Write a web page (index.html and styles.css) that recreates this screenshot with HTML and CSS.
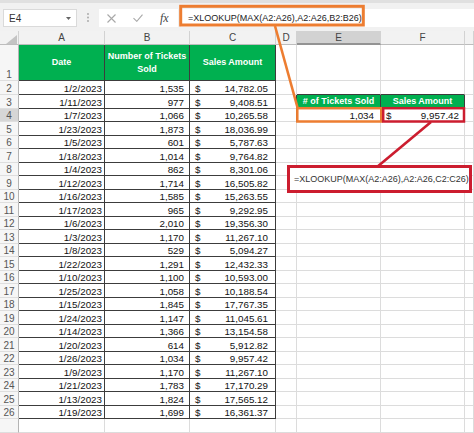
FILE: index.html
```html
<!DOCTYPE html>
<html lang="en">
<head>
    <meta charset="UTF-8">
    <meta name="viewport" content="width=device-width, initial-scale=1.0">
    <title>XLOOKUP with MAX</title>
    <link rel="stylesheet" href="styles.css">
</head>
<body>
    <div class="formula-bar">
        <div class="name-box">
            <span>E4</span>
            <svg class="caret" width="5" height="3" viewBox="0 0 5 3"><path d="M0 0h5L2.5 3z" fill="#666"/></svg>
        </div>
        <svg class="grip" width="8" height="18" viewBox="0 0 8 18">
            <circle cx="4" cy="5" r="0.9" fill="#a5a5a5"/>
            <circle cx="4" cy="8.5" r="0.9" fill="#a5a5a5"/>
            <circle cx="4" cy="12" r="0.9" fill="#a5a5a5"/>
        </svg>
        <div class="fx-buttons">
            <svg width="9" height="9" viewBox="0 0 9 9"><path d="M0.5 0.5L8.5 8.5M8.5 0.5L0.5 8.5" stroke="#a8a8a8" stroke-width="1.1" fill="none"/></svg>
            <svg width="10" height="8" viewBox="0 0 10 8"><path d="M0.5 4.2L3.8 7.3L9.5 0.6" stroke="#a8a8a8" stroke-width="1.1" fill="none"/></svg>
            <span class="fx">fx</span>
        </div>
        <div class="formula-input">=XLOOKUP(MAX(A2:A26),A2:A26,B2:B26)</div>
    </div>

    <table class="sheet">
        <colgroup>
            <col class="c-rn"><col class="c-a"><col class="c-b"><col class="c-c">
            <col class="c-d"><col class="c-e"><col class="c-f"><col class="c-g">
        </colgroup>
        <tr class="row-head">
            <th class="corner"><svg width="11" height="9" viewBox="0 0 11 9"><path d="M11 0V9H0z" fill="#c4c4c4"/></svg></th>
            <th>A</th><th>B</th><th>C</th><th>D</th><th class="sel">E</th><th>F</th><th></th>
        </tr>
        <tr class="row-title">
            <th class="rn">1</th>
            <td class="t hd">Date</td>
            <td class="t hd">Number of Tickets<br>Sold</td>
            <td class="t hd">Sales Amount</td>
            <td></td><td></td><td></td><td></td>
        </tr>
        <tr><th class="rn">2</th><td class="t a">1/2/2023</td><td class="t n">1,535</td><td class="t m"><span class="cur">$</span>14,782.05</td><td></td><td class="kb"></td><td class="kb"></td><td></td></tr>
        <tr><th class="rn">3</th><td class="t a">1/11/2023</td><td class="t n">977</td><td class="t m"><span class="cur">$</span>9,408.51</td><td class="kr"></td><td class="t hd">#&nbsp;of Tickets Sold</td><td class="t hd">Sales Amount</td><td></td></tr>
        <tr><th class="rn sel">4</th><td class="t a">1/7/2023</td><td class="t n">1,066</td><td class="t m"><span class="cur">$</span>10,265.58</td><td class="kr"></td><td class="t n result">1,034</td><td class="t m result"><span class="cur">$</span>9,957.42</td><td></td></tr>
        <tr><th class="rn">5</th><td class="t a">1/23/2023</td><td class="t n">1,873</td><td class="t m"><span class="cur">$</span>18,036.99</td><td></td><td></td><td></td><td></td></tr>
        <tr><th class="rn">6</th><td class="t a">1/5/2023</td><td class="t n">601</td><td class="t m"><span class="cur">$</span>5,787.63</td><td></td><td></td><td></td><td></td></tr>
        <tr><th class="rn">7</th><td class="t a">1/18/2023</td><td class="t n">1,014</td><td class="t m"><span class="cur">$</span>9,764.82</td><td></td><td></td><td></td><td></td></tr>
        <tr><th class="rn">8</th><td class="t a">1/4/2023</td><td class="t n">862</td><td class="t m"><span class="cur">$</span>8,301.06</td><td></td><td></td><td></td><td></td></tr>
        <tr><th class="rn">9</th><td class="t a">1/12/2023</td><td class="t n">1,714</td><td class="t m"><span class="cur">$</span>16,505.82</td><td></td><td></td><td></td><td></td></tr>
        <tr><th class="rn">10</th><td class="t a">1/16/2023</td><td class="t n">1,585</td><td class="t m"><span class="cur">$</span>15,263.55</td><td></td><td></td><td></td><td></td></tr>
        <tr><th class="rn">11</th><td class="t a">1/17/2023</td><td class="t n">965</td><td class="t m"><span class="cur">$</span>9,292.95</td><td></td><td></td><td></td><td></td></tr>
        <tr><th class="rn">12</th><td class="t a">1/6/2023</td><td class="t n">2,010</td><td class="t m"><span class="cur">$</span>19,356.30</td><td></td><td></td><td></td><td></td></tr>
        <tr><th class="rn">13</th><td class="t a">1/3/2023</td><td class="t n">1,170</td><td class="t m"><span class="cur">$</span>11,267.10</td><td></td><td></td><td></td><td></td></tr>
        <tr><th class="rn">14</th><td class="t a">1/8/2023</td><td class="t n">529</td><td class="t m"><span class="cur">$</span>5,094.27</td><td></td><td></td><td></td><td></td></tr>
        <tr><th class="rn">15</th><td class="t a">1/22/2023</td><td class="t n">1,291</td><td class="t m"><span class="cur">$</span>12,432.33</td><td></td><td></td><td></td><td></td></tr>
        <tr><th class="rn">16</th><td class="t a">1/10/2023</td><td class="t n">1,100</td><td class="t m"><span class="cur">$</span>10,593.00</td><td></td><td></td><td></td><td></td></tr>
        <tr><th class="rn">17</th><td class="t a">1/25/2023</td><td class="t n">1,058</td><td class="t m"><span class="cur">$</span>10,188.54</td><td></td><td></td><td></td><td></td></tr>
        <tr><th class="rn">18</th><td class="t a">1/15/2023</td><td class="t n">1,845</td><td class="t m"><span class="cur">$</span>17,767.35</td><td></td><td></td><td></td><td></td></tr>
        <tr><th class="rn">19</th><td class="t a">1/24/2023</td><td class="t n">1,147</td><td class="t m"><span class="cur">$</span>11,045.61</td><td></td><td></td><td></td><td></td></tr>
        <tr><th class="rn">20</th><td class="t a">1/14/2023</td><td class="t n">1,366</td><td class="t m"><span class="cur">$</span>13,154.58</td><td></td><td></td><td></td><td></td></tr>
        <tr><th class="rn">21</th><td class="t a">1/20/2023</td><td class="t n">614</td><td class="t m"><span class="cur">$</span>5,912.82</td><td></td><td></td><td></td><td></td></tr>
        <tr><th class="rn">22</th><td class="t a">1/26/2023</td><td class="t n">1,034</td><td class="t m"><span class="cur">$</span>9,957.42</td><td></td><td></td><td></td><td></td></tr>
        <tr><th class="rn">23</th><td class="t a">1/9/2023</td><td class="t n">1,170</td><td class="t m"><span class="cur">$</span>11,267.10</td><td></td><td></td><td></td><td></td></tr>
        <tr><th class="rn">24</th><td class="t a">1/21/2023</td><td class="t n">1,783</td><td class="t m"><span class="cur">$</span>17,170.29</td><td></td><td></td><td></td><td></td></tr>
        <tr><th class="rn">25</th><td class="t a">1/13/2023</td><td class="t n">1,824</td><td class="t m"><span class="cur">$</span>17,565.12</td><td></td><td></td><td></td><td></td></tr>
        <tr><th class="rn">26</th><td class="t a">1/19/2023</td><td class="t n">1,699</td><td class="t m"><span class="cur">$</span>16,361.37</td><td></td><td></td><td></td><td></td></tr>
        <tr class="row-last"><th class="rn"></th><td></td><td></td><td></td><td></td><td></td><td></td><td></td></tr>
    </table>

    <!-- callout boxes and connector lines drawn over the sheet -->
    <svg class="callouts" width="474" height="433" viewBox="0 0 474 433">
        <rect x="180.7" y="6.3" width="182.6" height="18.7" fill="none" stroke="#ed7d31" stroke-width="3"/>
        <line x1="275" y1="26" x2="297.5" y2="107.5" stroke="#ed7d31" stroke-width="2.6"/>
        <rect x="297.3" y="108.2" width="84" height="13.3" fill="none" stroke="#ed7d31" stroke-width="2.5"/>
        <rect x="383.2" y="108.2" width="80.8" height="13.3" fill="none" stroke="#cc1d2f" stroke-width="2.5"/>
        <line x1="431" y1="122" x2="377" y2="167" stroke="#cc1d2f" stroke-width="2.6"/>
    </svg>
    <div class="formula-note">=XLOOKUP(MAX(A2:A26),A2:A26,C2:C26)</div>
</body>
</html>
```

FILE: styles.css
```css
:root {
    --green: #00b050;
    --grid: #dcdcdc;
    --dark: #3c3c3c;
    --red: #cc1d2f;
    --head-bg: #f2f2f2;
}

* {
    margin: 0;
    padding: 0;
    box-sizing: border-box;
}

body {
    position: relative;
    width: 474px;
    height: 433px;
    overflow: hidden;
    background: #fff;
    font-family: "Liberation Sans", Arial, sans-serif;
    color: #111;
}

/* formula bar */
.formula-bar {
    display: flex;
    align-items: flex-start;
    height: 31px;
    padding: 6px 0 0 3px;
    background: #f1f1f1;
    border-top: 3px solid #e0e0e0;
}

.name-box {
    display: flex;
    align-items: center;
    justify-content: space-between;
    width: 74px;
    height: 18px;
    padding: 0 5px;
    background: #fff;
    border: 1px solid #dadada;
    font-size: 10px;
    color: #333;
}

.grip {
    margin-left: 7px;
}

.fx-buttons {
    display: flex;
    align-items: center;
    gap: 17px;
    width: 79px;
    height: 18px;
    margin-left: 7px;
    padding-left: 8px;
    background: #fff;
}

.fx {
    font-family: "Liberation Serif", serif;
    font-style: italic;
    font-size: 12px;
    color: #444;
}

.formula-input {
    flex: 1;
    height: 18px;
    margin-left: 3px;
    padding-left: 7px;
    background: #fff;
    font-size: 9px;
    line-height: 18px;
    color: #222;
    white-space: nowrap;
}

/* sheet grid */
.sheet {
    table-layout: fixed;
    border-collapse: separate;
    border-spacing: 0;
    width: 474px;
    font-size: 9.8px;
}

.c-rn { width: 19px; }
.c-a { width: 86px; }
.c-b { width: 85px; }
.c-c { width: 86px; }
.c-d { width: 21px; }
.c-e { width: 84px; }
.c-f { width: 84px; }
.c-g { width: 9px; }

.sheet tr {
    height: 13.52px;
}

.sheet th,
.sheet td {
    padding: 0;
    border-right: 1px solid var(--grid);
    border-bottom: 1px solid var(--grid);
    font-weight: normal;
    line-height: 11px;
    vertical-align: bottom;
    white-space: nowrap;
    overflow: hidden;
}

.sheet .row-head {
    height: 14px;
}

.row-head th {
    background: var(--head-bg);
    border-right-color: #d2d2d2;
    border-bottom-color: #bdbdbd;
    font-size: 10px;
    color: #444;
    text-align: center;
    vertical-align: middle;
}

.row-head th.sel {
    background: #d2d2d2;
    border-bottom: 2px solid #939393;
}

.corner {
    text-align: right !important;
}

.corner svg {
    display: block;
    margin: 4px 1px 0 auto;
}

.sheet .row-title {
    height: 36px;
}

th.rn {
    background: #f6f6f6;
    border-right-color: #b4b4b4;
    border-bottom-color: #dedede;
    font-size: 10px;
    color: #555;
    text-align: center;
}

th.rn.sel {
    background: #d6d6d6;
}

td.t {
    border-right-color: var(--dark);
    border-bottom-color: var(--dark);
}

td.kr {
    border-right-color: var(--dark);
}

td.kb {
    border-bottom-color: var(--dark);
}

td.hd {
    background: var(--green);
    color: #fff;
    font-weight: bold;
    font-size: 9px;
    line-height: 13px;
    text-align: center;
    vertical-align: middle;
}

td.a {
    text-align: right;
    padding-right: 2px;
}

td.n {
    text-align: right;
    padding-right: 5px;
}

td.m {
    text-align: right;
    padding: 0 7px 0 5px;
}

td.result.n {
    padding-right: 6px;
}

td.result.m {
    padding-right: 5px;
}

.cur {
    float: left;
}

/* annotations */
.callouts {
    position: absolute;
    top: 0;
    left: 0;
    pointer-events: none;
}

.formula-note {
    position: absolute;
    left: 287px;
    top: 165px;
    width: 185px;
    height: 28px;
    padding-left: 4px;
    background: #fff;
    border: 3px solid var(--red);
    font-size: 9px;
    line-height: 22px;
    color: #333;
    white-space: nowrap;
}
```
